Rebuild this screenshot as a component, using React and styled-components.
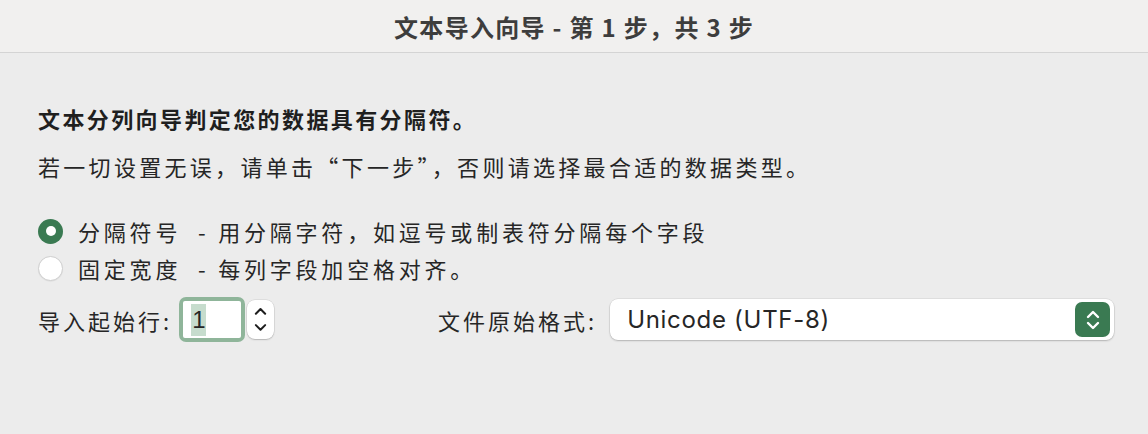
import React, { useState } from 'react'
import styled, { createGlobalStyle } from 'styled-components'

const GlobalStyle = createGlobalStyle`
  html, body {
    margin: 0;
    padding: 0;
    background: #ececec;
  }
  body {
    font-family: "Noto Sans CJK SC", "Noto Sans", "Liberation Sans", sans-serif;
    color: #262626;
  }
`

const Window = styled.div`
  width: 1148px;
  height: 434px;
  background: #ececec;
  display: flex;
  flex-direction: column;
  overflow: hidden;
`

const TitleBar = styled.div`
  height: 52px;
  flex: none;
  background: #f1f0ef;
  border-bottom: 1px solid #d4d4d4;
  display: flex;
  align-items: center;
  justify-content: center;
  font-size: 24px;
  font-weight: 700;
  letter-spacing: 1.3px;
  color: #3d3d3d;
`

const Body = styled.div`
  padding: 50px 34px 0 38px;
  display: flex;
  flex-direction: column;
`

const Heading = styled.div`
  font-size: 22px;
  font-weight: 700;
  line-height: 30px;
  color: #1f1f1f;
  letter-spacing: 2.4px;
`

const Hint = styled.div`
  margin-top: 18px;
  font-size: 22px;
  line-height: 30px;
  letter-spacing: 3.3px;
`

const Options = styled.div`
  margin-top: 35px;
  display: flex;
  flex-direction: column;
  gap: 7px;
`

const OptionRow = styled.label`
  display: flex;
  align-items: center;
  height: 30px;
  font-size: 22px;
  letter-spacing: 3.8px;
`

const Radio = styled.span`
  width: 25px;
  height: 25px;
  box-sizing: border-box;
  border-radius: 50%;
  flex: none;
  margin-right: 15px;
  background: ${p => (p.$checked ? '#3a7a52' : '#ffffff')};
  border: ${p => (p.$checked ? 'none' : '1px solid #cfcfcf')};
  box-shadow: ${p => (p.$checked ? 'none' : '0 0.5px 1px rgba(0,0,0,0.08)')};
  display: flex;
  align-items: center;
  justify-content: center;
  &::after {
    content: '';
    display: ${p => (p.$checked ? 'block' : 'none')};
    width: 10px;
    height: 10px;
    border-radius: 50%;
    background: #fff;
  }
`

const OptionName = styled.span`
  width: 120px;
`

const Controls = styled.div`
  margin-top: 14px;
  display: flex;
  align-items: center;
`

const FieldLabel = styled.span`
  font-size: 22px;
  letter-spacing: 3px;
  margin-right: 7px;
  flex: none;
`

const FocusRing = styled.div`
  width: 66px;
  height: 45px;
  flex: none;
  box-sizing: border-box;
  border-radius: 7px;
  background: #8fb59a;
  padding: 4px;
  display: flex;
`

const NumberBox = styled.div`
  flex: 1;
  background: #fff;
  border-radius: 2px;
  display: flex;
  align-items: center;
  padding-left: 8px;
  font-family: "Liberation Sans", "Noto Sans", sans-serif;
  font-size: 24px;
  color: #262626;
`

const Selected = styled.span`
  background: #c6dccd;
  line-height: 32px;
  padding: 0 1px;
`

const Stepper = styled.div`
  width: 27px;
  height: 39px;
  flex: none;
  margin-left: 2px;
  background: #fff;
  border-radius: 8px;
  box-shadow: 0 0 0 0.5px rgba(0,0,0,0.12), 0 1px 1.5px rgba(0,0,0,0.18);
  display: flex;
  flex-direction: column;
  align-items: center;
  justify-content: space-around;
  padding: 2px 0;
  box-sizing: border-box;
`

const FormatGroup = styled.div`
  margin-left: auto;
  display: flex;
  align-items: center;
  width: 676px;
`

const SelectBox = styled.div`
  flex: 1;
  height: 41px;
  margin-left: 6px;
  background: #fff;
  border-radius: 8px;
  box-shadow: 0 0 0 0.5px rgba(0,0,0,0.1), 0 1px 2px rgba(0,0,0,0.2);
  display: flex;
  align-items: center;
  justify-content: space-between;
  padding: 0 4px 0 17px;
  box-sizing: border-box;
  font-family: "Inter", "Liberation Sans", sans-serif;
  font-size: 24px;
  letter-spacing: 0.7px;
  color: #262626;
`

const SelectButton = styled.div`
  width: 35px;
  height: 35px;
  border-radius: 7px;
  background: #3a7a52;
  display: flex;
  align-items: center;
  justify-content: center;
`

const Chevron = ({ up, color = '#1e1e1e', size = 14 }) => (
  <svg width={size} height={size * 0.6} viewBox="0 0 14 8">
    <path
      d={up ? 'M2 7 L7 2 L12 7' : 'M2 1 L7 6 L12 1'}
      fill="none"
      stroke={color}
      strokeWidth="2.2"
      strokeLinecap="round"
      strokeLinejoin="round"
    />
  </svg>
)

export default function App() {
  const [mode, setMode] = useState('delimited')

  return (
    <Window>
      <GlobalStyle />
      <TitleBar>文本导入向导 - 第 1 步，共 3 步</TitleBar>
      <Body>
        <Heading>文本分列向导判定您的数据具有分隔符。</Heading>
        <Hint>若一切设置无误，请单击“下一步”，否则请选择最合适的数据类型。</Hint>
        <Options>
          <OptionRow onClick={() => setMode('delimited')}>
            <Radio $checked={mode === 'delimited'} />
            <OptionName>分隔符号</OptionName>
            <span>- 用分隔字符，如逗号或制表符分隔每个字段</span>
          </OptionRow>
          <OptionRow onClick={() => setMode('fixed')}>
            <Radio $checked={mode === 'fixed'} />
            <OptionName>固定宽度</OptionName>
            <span>- 每列字段加空格对齐。</span>
          </OptionRow>
        </Options>
        <Controls>
          <FieldLabel>导入起始行:</FieldLabel>
          <FocusRing>
            <NumberBox>
              <Selected>1</Selected>
            </NumberBox>
          </FocusRing>
          <Stepper>
            <Chevron up size={13} />
            <Chevron size={13} />
          </Stepper>
          <FormatGroup>
            <FieldLabel>文件原始格式:</FieldLabel>
            <SelectBox>
              <span>Unicode (UTF-8)</span>
              <SelectButton>
                <svg width="16" height="24" viewBox="0 0 16 24">
                  <path d="M3 9 L8 4 L13 9 M3 15 L8 20 L13 15" fill="none" stroke="#fff" strokeWidth="2.4" strokeLinecap="round" strokeLinejoin="round" />
                </svg>
              </SelectButton>
            </SelectBox>
          </FormatGroup>
        </Controls>
      </Body>
    </Window>
  )
}
